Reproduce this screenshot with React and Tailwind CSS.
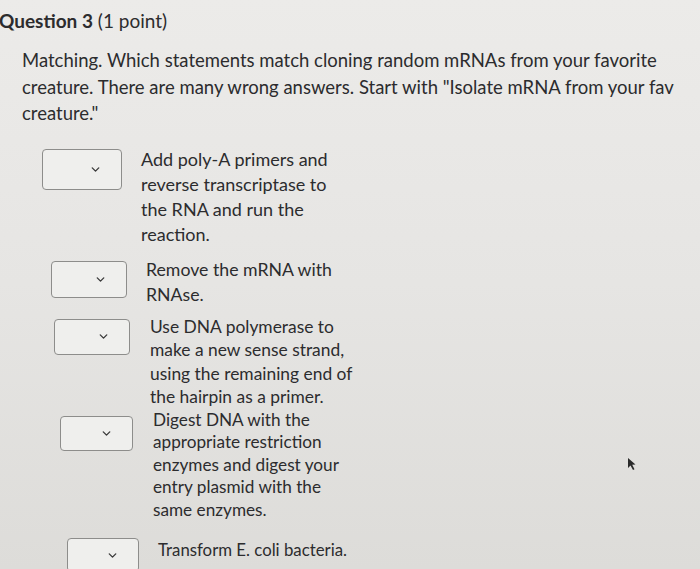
import { ChevronDown } from "lucide-react";

const items = [
  { ml: "ml-[42px]", gap: "gap-[19px]", box: "w-[80px] h-[41px] mt-[0px]", text: "text-[18px] leading-[25px]", lines: ["Add poly-A primers and", "reverse transcriptase to", "the RNA and run the", "reaction."], mb: "mb-[12px]" },
  { ml: "ml-[51px]", gap: "gap-[19px]", box: "w-[76px] h-[37px] mt-[2px]", text: "text-[17.7px] leading-[25px]", lines: ["Remove the mRNA with", "RNAse."], mb: "mb-[10px]" },
  { ml: "ml-[54px]", gap: "gap-[20px]", box: "w-[76px] h-[36px] mt-[2px]", text: "text-[17.4px] leading-[23.5px]", lines: ["Use DNA polymerase to", "make a new sense strand,", "using the remaining end of", "the hairpin as a primer."], mb: "mb-[2px]" },
  { ml: "ml-[60px]", gap: "gap-[20px]", box: "w-[73px] h-[35px] mt-[5px]", text: "text-[17.2px] leading-[22.5px]", lines: ["Digest DNA with the", "appropriate restriction", "enzymes and digest your", "entry plasmid with the", "same enzymes."], mb: "mb-[17px]" },
  { ml: "ml-[67px]", gap: "gap-[19px]", box: "w-[72px] h-[34px] mt-[0px]", text: "text-[16.8px] leading-[28px]", lines: ["Transform E. coli bacteria."], mb: "mb-0" },
];

function SelectBox({ className }) {
  return (
    <div className={`shrink-0 rounded-[4px] border border-[#8d8d8b] bg-[#efefed] flex items-center justify-end pr-[19px] ${className}`}>
      <ChevronDown size={13} strokeWidth={2.5} className="text-[#3a3a3a]" />
    </div>
  );
}

export default function App() {
  return (
    <div
      className="relative w-[700px] h-[569px] overflow-hidden bg-gradient-to-b from-[#ecebe9] via-[#e6e5e3] to-[#dddcd9] text-[#2c2c2e]"
      style={{ fontFamily: "Lato, 'Noto Sans', sans-serif" }}
    >
      <div className="pt-[8px] text-[19px] leading-[26px] -ml-[1px]">
        <span className="font-bold">Question 3</span> <span>(1 point)</span>
      </div>

      <p className="mt-[13px] ml-[22px] text-[18.5px] leading-[26.5px]">
        Matching. Which statements match cloning random mRNAs from your favorite
        <br />
        creature. There are many wrong answers. Start with "Isolate mRNA from your fav
        <br />
        creature."
      </p>

      <div className="mt-[22px] flex flex-col">
        {items.map((it, i) => (
          <div key={i} className={`flex items-start ${it.ml} ${it.gap} ${it.mb}`}>
            <SelectBox className={it.box} />
            <div className={`${it.text} -mt-[2px]`}>
              {it.lines.map((l, j) => (
                <div key={j}>{l}</div>
              ))}
            </div>
          </div>
        ))}
      </div>

      <svg className="absolute left-[627px] top-[457px]" width="12" height="14" viewBox="0 0 12 14">
        <path d="M1 1 L1 11 L3.5 8.5 L6 13 L7.5 12.2 L5.2 7.8 L8.5 7.5 Z" fill="#2a2a2a" />
      </svg>
    </div>
  );
}
